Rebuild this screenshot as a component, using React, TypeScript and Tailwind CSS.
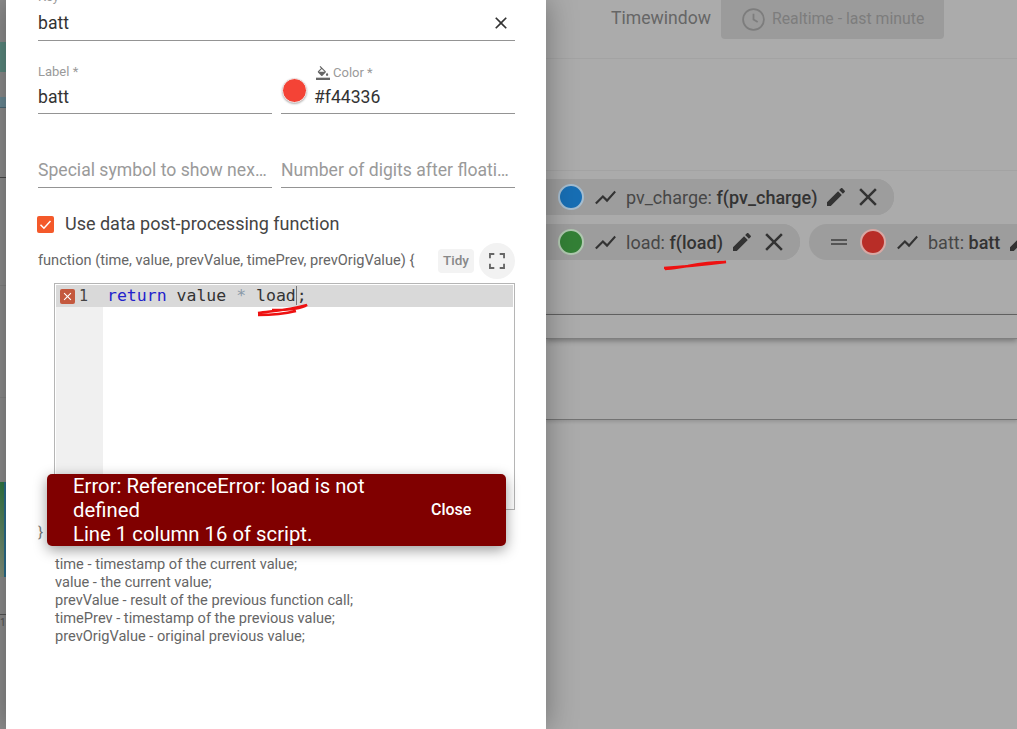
const editPath = "M3 17.25V21h3.75L17.81 9.94l-3.75-3.75L3 17.25zM20.71 7.04c.39-.39.39-1.02 0-1.41l-2.34-2.34c-.39-.39-1.02-.39-1.41 0l-1.83 1.83 3.75 3.75 1.83-1.83z";
const closePath = "M19 6.41L17.59 5 12 10.59 6.41 5 5 6.41 10.59 12 5 17.59 6.41 19 12 13.41 17.59 19 19 17.59 13.41 12z";
const chartPath = "M3.5 18.49l6-6.01 4 4L22 6.92l-1.41-1.41-7.09 7.97-4-4L2 16.99z";

function Icon({ d, className }: { d: string; className: string }) {
  return (
    <svg viewBox="0 0 24 24" fill="currentColor" className={className}>
      <path d={d} />
    </svg>
  );
}

function LeftStrip() {
  return (
    <div className="w-[6px] h-full shrink-0 bg-[#8e8e8e] flex flex-col">
      <div className="h-[42px]" />
      <div className="h-[30px] bg-[#5c8b81]" />
      <div className="h-[25px]" />
      <div className="h-[11px] bg-[#6b8b97] border-b border-[#4d6a78]" />
      <div className="h-[70px] border-b border-[#4a4a4a]" />
      <div className="h-[108px] border-b border-[#848484]" />
      <div className="h-[112px] border-b border-[#868686]" />
      <div className="h-[84px]" />
      <div className="h-[95px] bg-gradient-to-b from-[#2f7a45] to-[#85937f] border-r-2 border-[#2b6f8f]" />
      <div className="h-[38px] border-b border-[#555]" />
      <div className="text-[10px] leading-[16px] text-[#555]">1</div>
    </div>
  );
}

function Field({ label, value, placeholder, className }: { label?: string; value?: string; placeholder?: string; className: string }) {
  return (
    <div className={`border-b border-[#949494] ${className}`}>
      {label && <div className="text-[13px] leading-[15px] text-[#9a9a9a]">{label}</div>}
      {value && <div className="mt-[5px] text-[17.6px] leading-[26px] text-[#333]">{value}</div>}
      {placeholder && <div className="-mt-[3px] text-[17.6px] leading-[26px] text-[#9a9a9a] whitespace-nowrap">{placeholder}</div>}
    </div>
  );
}

function Editor() {
  return (
    <div className="ml-[16px] h-[227px] border border-[#b5b5b5] p-px flex flex-col">
      <div className="h-[22px] bg-[#d9d9d9] flex items-center shrink-0 font-['DejaVu_Sans_Mono',monospace] text-[16.5px] text-[#333]">
        <div className="w-[51px] shrink-0 pl-[4px] flex items-center gap-[4px]">
          <span className="w-[15px] h-[15px] rounded-[2px] bg-[#c4583e] flex items-center justify-center text-white">
            <Icon d={closePath} className="w-[13px] h-[13px]" />
          </span>
          <span className="text-[15px] text-[#444]">1</span>
        </div>
        <span className="whitespace-pre">
          <span className="text-[#2222cc]">return</span> value <span className="text-[#8a9aa8]">*</span> load
          <span className="border-l border-[#777]">;</span>
        </span>
      </div>
      <div className="flex-1 flex">
        <div className="w-[47px] bg-[#f0f0f0]" />
      </div>
    </div>
  );
}

function FormPanel() {
  return (
    <div className="relative z-10 w-[540px] h-full shrink-0 bg-white pl-[32px] pr-[31px] overflow-hidden shadow-[0_0_28px_rgba(0,0,0,0.35)]">
      <div className="-mt-[11px] border-b border-[#949494]">
        <div className="text-[13px] leading-[15px] text-[#9a9a9a]">Key</div>
        <div className="flex items-center justify-between h-[36px] pt-[2px]">
          <span className="text-[17.6px] text-[#333]">batt</span>
          <Icon d={closePath} className="w-[20px] h-[20px] mr-[4px] text-[#333]" />
        </div>
      </div>

      <div className="flex gap-[9px] mt-[23px]">
        <Field label="Label *" value="batt" className="w-[234px] h-[50px]" />
        <div className="flex-1 h-[50px] border-b border-[#949494] flex">
          <div className="w-[25px] h-[25px] mt-[14px] ml-[1px] rounded-full bg-[#f44336] border border-[#f0f0f0] shadow-[0_1px_2px_rgba(0,0,0,0.3)] shrink-0" />
          <div className="pl-[9px]">
            <div className="flex items-center gap-[3px] h-[18px] text-[13px] text-[#9a9a9a]">
              <svg viewBox="0 0 24 24" fill="currentColor" className="w-[14px] h-[14px] text-[#666]">
                <path d="M16.56 8.94L7.62 0 6.21 1.41l2.38 2.38-5.15 5.15c-.59.59-.59 1.54 0 2.12l5.5 5.5c.29.29.68.44 1.06.44s.77-.15 1.06-.44l5.5-5.5c.59-.58.59-1.53 0-2.12zM5.21 10L10 5.21 14.79 10H5.21zM19 11.5s-2 2.17-2 3.5c0 1.1.9 2 2 2s2-.9 2-2c0-1.33-2-3.5-2-3.5z" />
                <path d="M0 20h24v4H0z" />
              </svg>
              Color *
            </div>
            <div className="text-[17.6px] leading-[26px] text-[#333] -ml-[2px] mt-[2px]">#f44336</div>
          </div>
        </div>
      </div>

      <div className="flex gap-[9px] mt-[46px]">
        <Field placeholder="Special symbol to show nex…" className="w-[234px] h-[28px]" />
        <Field placeholder="Number of digits after floati…" className="flex-1 min-w-0 h-[28px]" />
      </div>

      <div className="flex items-center mt-[26px] h-[20px]">
        <span className="w-[17px] h-[17px] -ml-[1px] rounded-[2px] bg-[#f4592a] flex items-center justify-center">
          <svg viewBox="0 0 24 24" fill="none" stroke="white" strokeWidth="2.4" className="w-[15px] h-[15px]">
            <path d="M4 12.5l5.5 5.5L20 6.5" />
          </svg>
        </span>
        <span className="ml-[11px] -mt-[2px] text-[18px] text-[#444] whitespace-nowrap">Use data post-processing function</span>
      </div>

      <div className="flex items-center justify-between mt-[8px] h-[37px]">
        <span className="text-[14.6px] text-[#666]">function (time, value, prevValue, timePrev, prevOrigValue) {"{"}</span>
        <div className="flex items-center gap-[5px]">
          <span className="w-[36px] h-[24px] rounded bg-[#f3f3f3] text-[13.5px] font-medium text-[#888] flex items-center justify-center">Tidy</span>
          <span className="w-[36px] h-[36px] rounded-full bg-[#f2f2f2] flex items-center justify-center text-[#666]">
            <svg viewBox="0 0 24 24" fill="none" stroke="currentColor" strokeWidth="1.7" className="w-[26px] h-[26px]">
              <path d="M5.5 9.5V5.5H9.5M14.5 5.5H18.5V9.5M18.5 14.5V18.5H14.5M9.5 18.5H5.5V14.5" />
            </svg>
          </span>
        </div>
      </div>

      <div className="mt-[4px]">
        <Editor />
      </div>

      <div className="mt-[11px] text-[15px] leading-[22px] text-[#777]">{"}"}</div>

      <div className="ml-[17px] mt-[12px] text-[14.6px] leading-[18px] text-[#666]">
        <div>time - timestamp of the current value;</div>
        <div>value - the current value;</div>
        <div>prevValue - result of the previous function call;</div>
        <div>timePrev - timestamp of the previous value;</div>
        <div>prevOrigValue - original previous value;</div>
      </div>

      {/* error toast over the editor */}
      <div className="absolute left-[41px] top-[474px] w-[459px] h-[72px] rounded-[5px] bg-[#800000] text-white flex items-center pl-[26px] shadow-[0_4px_14px_rgba(0,0,0,0.4)]">
        <div className="w-[325px] text-[20.3px] leading-[24px]">
          Error: ReferenceError: load is not defined
          <br />
          Line 1 column 16 of script.
        </div>
        <span className="ml-[33px] text-[16px] font-medium">Close</span>
      </div>

      {/* red pen mark */}
      <svg className="absolute left-[250px] top-[300px] w-[62px] h-[18px]" viewBox="0 0 62 18" fill="none" stroke="#ee1111" strokeWidth="2.5">
        <path d="M2 13C15 11 30 11 51 5C45 9 32 10 16 10M2 15C14 15 28 14 40 11" />
      </svg>
    </div>
  );
}

function Chip({ color, ring, name, value, children }: { color: string; ring: string; name: string; value: string; children?: React.ReactNode }) {
  return (
    <div className="h-[36px] rounded-full bg-[#9d9d9d] flex items-center shrink-0 text-[18px]">
      {children}
      <span className={`w-[26px] h-[26px] rounded-full border-2 ${color} ${ring} shrink-0`} />
      <Icon d={chartPath} className="w-[25px] h-[25px] ml-[9px] text-[#333]" />
      <span className="ml-[8px] pt-[1px] text-[#474747] whitespace-nowrap">
        {name}: <span className="font-medium text-[#333]">{value}</span>
      </span>
      <Icon d={editPath} className="w-[24px] h-[24px] ml-[7px] text-[#333]" />
      <Icon d={closePath} className="w-[30px] h-[30px] ml-[5px] text-[#333]" />
    </div>
  );
}

function RightSide() {
  return (
    <div className="flex-1 h-full min-w-0 bg-[#ababab] overflow-hidden relative">
      <div className="h-[59px] border-b border-[#a3a3a3] flex items-start pl-[65px]">
        <span className="mt-[6px] text-[17.6px] leading-[24px] text-[#666]">Timewindow</span>
        <div className="ml-[10px] w-[223px] h-[39px] rounded-b bg-[#9b9b9b] flex items-center pl-[20px] text-[#7d7d7d]">
          <svg viewBox="0 0 24 24" fill="none" stroke="currentColor" strokeWidth="1.7" className="w-[25px] h-[25px] shrink-0 -mt-[1px]">
            <circle cx="12" cy="12" r="10" />
            <path d="M12 6.5V12l4 2.5" />
          </svg>
          <span className="ml-[6px] -mt-[1px] text-[15.8px] whitespace-nowrap">Realtime - last minute</span>
        </div>
      </div>

      <div className="h-[112px] border-b border-[#a3a3a3]" />

      <div className="pt-[8px] flex flex-col gap-[9px]">
        <div className="w-[348px] pl-[12px] rounded-r-full bg-[#9d9d9d]">
          <Chip color="bg-[#176eb4]" ring="border-[#a5bdd0]" name="pv_charge" value="f(pv_charge)" />
        </div>
        <div className="flex gap-[9px]">
          <div className="w-[254px] pl-[12px] rounded-r-full bg-[#9d9d9d] shrink-0">
            <Chip color="bg-[#338036]" ring="border-[#b0c8b0]" name="load" value="f(load)" />
          </div>
          <Chip color="bg-[#b82d27]" ring="border-[#d8a8a4]" name="batt" value="batt">
            <Icon d="M20 9H4v2h16V9zM4 15h16v-2H4v2z" className="w-[24px] h-[24px] ml-[18px] mr-[9px] text-[#555]" />
          </Chip>
        </div>
      </div>

      <div className="mt-[54px] border-b border-[#666]" />
      <div className="h-[24px] border-b border-[#808080] shadow-[0_2px_5px_rgba(0,0,0,0.3)]" />
      <div className="h-[81px] border-b border-[#737373] shadow-[0_2px_3px_rgba(0,0,0,0.12)]" />

      {/* red pen mark */}
      <svg className="absolute left-[114px] top-[258px] w-[70px] h-[14px]" viewBox="0 0 70 14" fill="none" stroke="#ee1111" strokeWidth="2.5">
        <path d="M4 10C22 9 42 7 66 4C54 4 38 6 28 8C20 9 12 11 5 11" />
      </svg>
    </div>
  );
}

export default function App() {
  return (
    <div className="flex w-[1017px] h-[729px] overflow-hidden font-[Roboto,sans-serif]">
      <LeftStrip />
      <FormPanel />
      <RightSide />
    </div>
  );
}
